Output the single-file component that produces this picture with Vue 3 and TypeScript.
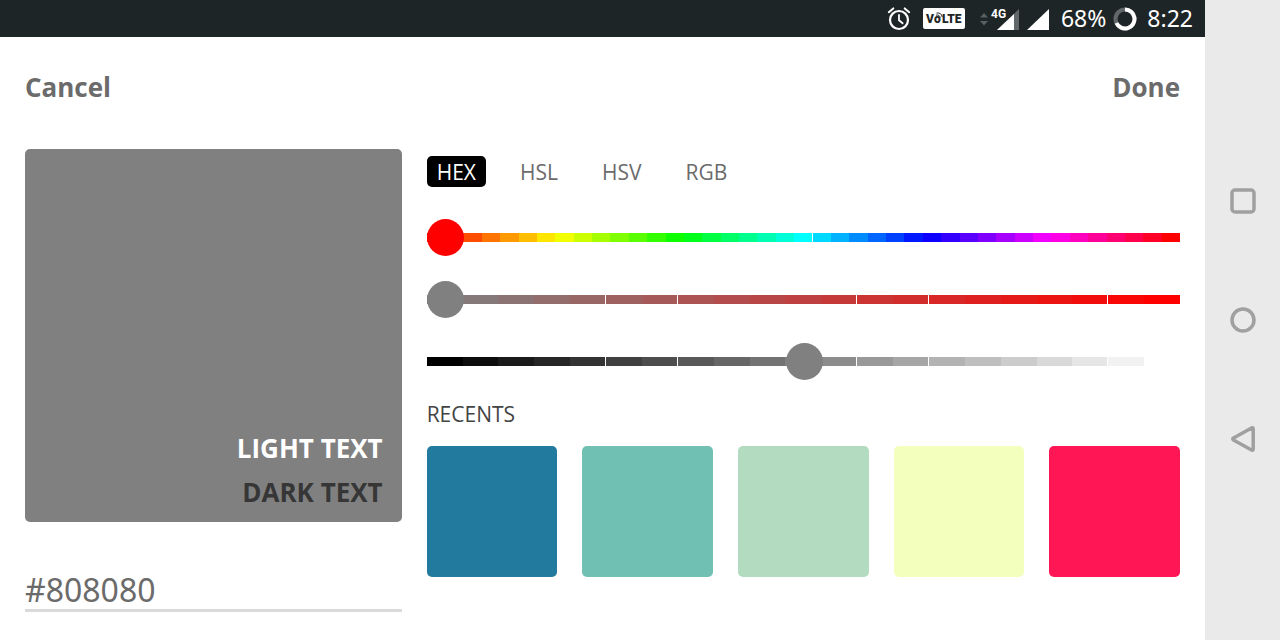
<script setup lang="ts">
import { computed, ref } from 'vue'

interface Segment {
  color: string
  seam: boolean
}

interface Slider {
  id: string
  label: string
  max: number
  segments: Segment[]
}

function buildSegments(count: number, seams: number[], paint: (i: number) => string): Segment[] {
  return Array.from({ length: count }, (_, i) => ({ color: paint(i), seam: seams.includes(i) }))
}

const sliders: Slider[] = [
  {
    id: 'hue',
    label: 'Hue',
    max: 360,
    segments: buildSegments(41, [21], (i) => `hsl(${i * 9}, 100%, 50%)`),
  },
  {
    id: 'saturation',
    label: 'Saturation',
    max: 100,
    segments: buildSegments(21, [5, 7, 12, 14, 19], (i) => `hsl(0, ${i * 5}%, 50%)`),
  },
  {
    id: 'lightness',
    label: 'Lightness',
    max: 255,
    segments: buildSegments(21, [5, 7, 12, 14, 19], (i) => `hsl(0, 0%, ${i * 5}%)`),
  },
]

const values = ref<number[]>([0, 0, 128])
const modes = ['HEX', 'HSL', 'HSV', 'RGB']
const mode = ref('HEX')
const recents = ['#237a9f', '#71c0b4', '#b2dbbf', '#f3ffbd', '#ff1654']

function toHex(h: number, s: number, l: number): string {
  const a = s * Math.min(l, 1 - l)
  const channel = (n: number) => {
    const k = (n + h / 30) % 12
    const c = l - a * Math.max(-1, Math.min(k - 3, 9 - k, 1))
    return Math.round(c * 255).toString(16).padStart(2, '0')
  }
  return `#${channel(0)}${channel(8)}${channel(4)}`
}

const color = computed(() => toHex(values.value[0], values.value[1] / 100, values.value[2] / 255))
const thumbs = computed(() => [`hsl(${values.value[0]}, 100%, 50%)`, color.value, color.value])
</script>

<template>
  <div class="screen">
    <div class="app">
      <div class="status">
        <svg class="alarm" width="24" height="26" viewBox="0 0 24 26" fill="none" stroke="#fff" stroke-linecap="round">
          <circle cx="12" cy="14" r="9" stroke-width="2.2" />
          <path d="M12 9v5.300l3.600 3" stroke-width="1.800" />
          <path d="M1.800 6.200 6.300 2.400M22.200 6.200 17.700 2.400" stroke-width="2" />
        </svg>
        <svg class="volte" width="42" height="21" viewBox="0 0 42 21">
          <rect width="42" height="21" rx="2" fill="#fff" />
          <g class="badge-text" fill="#1e2526">
            <text x="3" y="15">V</text>
            <text x="11" y="15">o</text>
            <text x="19" y="15">LTE</text>
          </g>
          <g fill="none" stroke="#1e2526" stroke-width="1">
            <path d="M13 7.200q3.500-1 4.200 2.600" />
            <path d="M13.500 5q5-.6 5.700 4" />
          </g>
        </svg>
        <svg class="mobile" width="40" height="26" viewBox="0 0 40 26">
          <path d="M0 11.500 4 7l4 4.500zM0 15h8l-4 4.500z" fill="#596062" />
          <path d="M39 3v21H17z" fill="#626869" />
          <path d="M34 8v16H17z" fill="#fff" />
          <text class="net-text" x="11" y="12" fill="#fff">4G</text>
        </svg>
        <svg class="signal" width="22" height="26" viewBox="0 0 22 26">
          <path d="M22 3v21H0z" fill="#fff" />
        </svg>
        <span class="percent">68%</span>
        <svg class="ring" width="24" height="24" viewBox="0 0 24 24" fill="none" stroke-width="4">
          <circle cx="12" cy="12" r="9.500" stroke="#626869" />
          <path d="M12 2.500A9.500 9.500 0 1 1 3.400 16" stroke="#fff" />
        </svg>
        <span class="clock">8:22</span>
      </div>

      <header class="actions">
        <button type="button">Cancel</button>
        <button type="button">Done</button>
      </header>

      <main class="picker">
        <section class="left">
          <div class="preview" :style="{ backgroundColor: color }">
            <span class="light">LIGHT TEXT</span>
            <span class="dark">DARK TEXT</span>
          </div>
          <input class="hex" type="text" aria-label="Hex color" :value="color" />
        </section>

        <section class="right">
          <div class="modes">
            <button
              v-for="m in modes"
              :key="m"
              type="button"
              :class="{ active: m === mode }"
              :aria-pressed="m === mode"
              @click="mode = m"
            >{{ m }}</button>
          </div>

          <div class="sliders">
            <div v-for="(s, i) in sliders" :key="s.id" class="slider">
              <div class="track">
                <span
                  v-for="(seg, n) in s.segments"
                  :key="n"
                  :class="{ seam: seg.seam }"
                  :style="{ backgroundColor: seg.color }"
                ></span>
              </div>
              <input
                v-model.number="values[i]"
                type="range"
                min="0"
                :max="s.max"
                :aria-label="s.label"
                :style="{ color: thumbs[i] }"
              />
            </div>
          </div>

          <h2>RECENTS</h2>
          <div class="recents">
            <button
              v-for="c in recents"
              :key="c"
              type="button"
              :aria-label="c"
              :style="{ backgroundColor: c }"
            ></button>
          </div>
        </section>
      </main>
    </div>

    <nav class="system">
      <button type="button" aria-label="Overview">
        <svg width="26" height="26" viewBox="0 0 26 26"><rect x="2" y="2" width="22" height="22" rx="3" /></svg>
      </button>
      <button type="button" aria-label="Home">
        <svg width="26" height="26" viewBox="0 0 26 26"><circle cx="13" cy="13" r="11" /></svg>
      </button>
      <button type="button" aria-label="Back">
        <svg width="26" height="26" viewBox="0 0 26 26">
          <path d="M22 1.800Q23.200 1.500 23.200 3v20q0 1.500-1.200 1.200L3.500 14q-1.500-1 0-2z" />
        </svg>
      </button>
    </nav>
  </div>
</template>

<style>
body {
  margin: 0;
  background: #fff;
}
</style>

<style scoped>
.screen {
  display: flex;
  min-height: 100vh;
  font-family: "Open Sans", "Noto Sans", sans-serif;
  color: #6b6b6b;
}

.app {
  flex: 1;
  min-width: 0;
  background: #fff;
}

button {
  padding: 0;
  border: 0;
  background: none;
  font: inherit;
  color: inherit;
  cursor: pointer;
}

.status {
  display: flex;
  align-items: center;
  justify-content: flex-end;
  height: 37px;
  padding-right: 12px;
  background: #1e2526;
  color: #fff;
  font-family: "Noto Sans", "Open Sans", sans-serif;
  font-size: 23px;
  line-height: 37px;
}

.volte {
  margin-left: 12px;
}

.mobile {
  margin-left: 15px;
}

.signal {
  margin-left: 7px;
}

.percent {
  margin-left: 12px;
}

.ring {
  margin-left: 7px;
}

.clock {
  margin-left: 10px;
}

.badge-text {
  font: 900 12px Roboto, sans-serif;
}

.net-text {
  font: 700 12px Roboto, sans-serif;
}

.actions {
  display: flex;
  justify-content: space-between;
  padding: 32px 25px 44px;
  font-size: 26px;
  font-weight: 700;
  line-height: 36px;
}

.picker {
  display: grid;
  grid-template-columns: 1fr 2fr;
  gap: 25px;
  padding: 0 25px;
}

.left,
.right {
  min-width: 0;
}

.preview {
  display: flex;
  flex-direction: column;
  align-items: flex-end;
  justify-content: flex-end;
  box-sizing: border-box;
  height: 373px;
  padding: 8px 19px;
  border-radius: 5px;
  font-size: 26px;
  font-weight: 700;
  line-height: 44px;
}

.light {
  color: #fff;
}

.dark {
  color: #363636;
}

.hex {
  display: block;
  box-sizing: border-box;
  width: 100%;
  height: 47px;
  margin-top: 43px;
  padding: 4px 0 0;
  border: 0;
  border-bottom: 3px solid #dadada;
  outline: 0;
  background: none;
  color: #6b6b6b;
  font: 400 32px "Noto Sans", "Open Sans", sans-serif;
}

.right {
  padding-top: 7px;
}

.modes {
  display: flex;
  gap: 24px;
  font-size: 21px;
  line-height: 29px;
}

.modes button {
  padding: 2px 10px 0;
  border-radius: 5px;
}

.modes .active {
  background: #000;
  color: #fff;
}

.sliders {
  display: grid;
  gap: 25px;
  margin-top: 32px;
}

.slider {
  display: grid;
  align-items: center;
}

.track,
.slider input {
  grid-area: 1 / 1;
}

.track {
  display: flex;
  height: 9px;
}

.track span {
  flex: 1;
}

.track .seam {
  box-shadow: -1px 0 #fff;
}

.slider input {
  appearance: none;
  width: 100%;
  height: 37px;
  margin: 0;
  background: none;
}

.slider input::-webkit-slider-thumb {
  appearance: none;
  width: 37px;
  height: 37px;
  border-radius: 50%;
  background: currentColor;
}

h2 {
  margin: 22px 0 20px;
  color: #444;
  font-size: 21px;
  font-weight: 400;
  line-height: 24px;
}

.recents {
  display: grid;
  grid-template-columns: repeat(5, 1fr);
  gap: 25px;
}

.recents button {
  aspect-ratio: 1;
  border-radius: 5px;
}

.system {
  display: flex;
  flex-direction: column;
  align-items: center;
  justify-content: center;
  gap: 93px;
  width: 75px;
  background: #eaeaea;
}

.system svg {
  display: block;
  fill: none;
  stroke: #a0a0a0;
  stroke-width: 3.5;
  stroke-linejoin: round;
}
</style>
